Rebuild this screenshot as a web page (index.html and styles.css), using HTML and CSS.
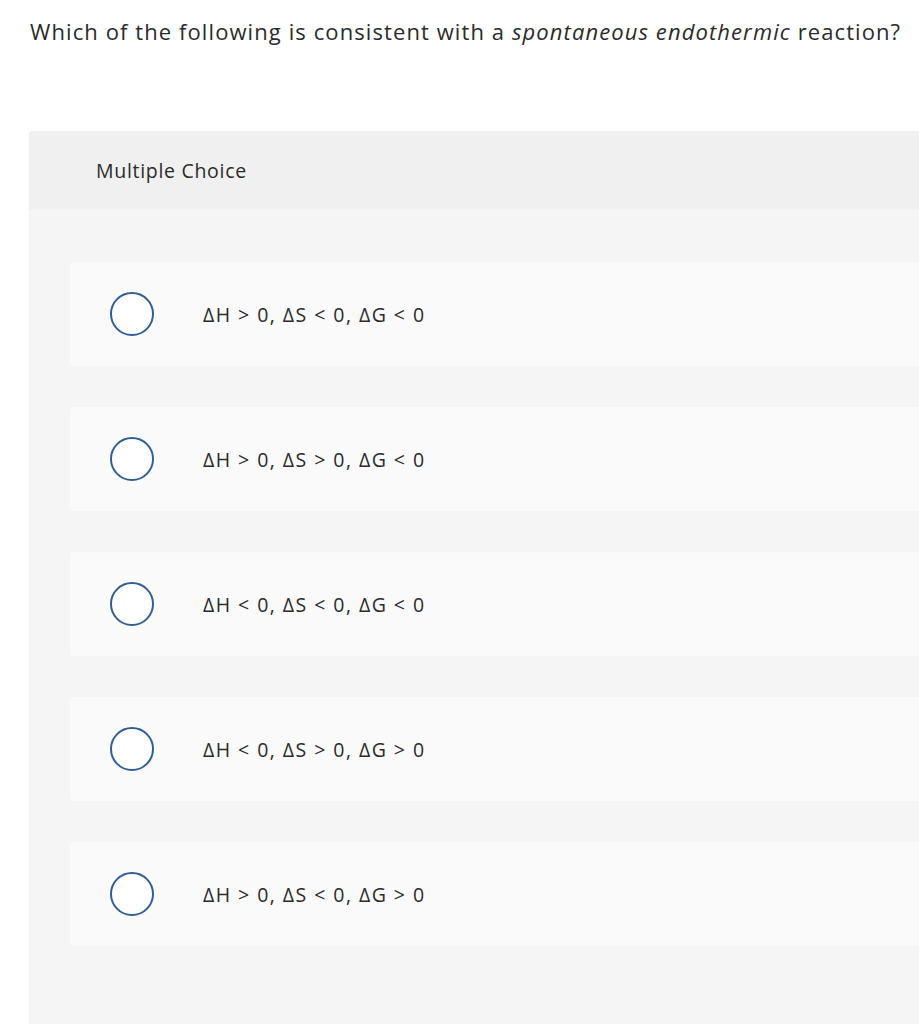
FILE: index.html
```html
<!DOCTYPE html>
<html>
<head>
<meta charset="utf-8">
<link rel="stylesheet" href="styles.css">
</head>
<body>
<p class="question">Which of the following is consistent with a <em>spontaneous endothermic</em> reaction?</p>
<div class="panel">
  <div class="panel-head">Multiple Choice</div>
  <div class="options">
    <div class="option"><span class="radio"></span><span class="label">ΔH &gt; 0, ΔS &lt; 0, ΔG &lt; 0</span></div>
    <div class="option"><span class="radio"></span><span class="label">ΔH &gt; 0, ΔS &gt; 0, ΔG &lt; 0</span></div>
    <div class="option"><span class="radio"></span><span class="label">ΔH &lt; 0, ΔS &lt; 0, ΔG &lt; 0</span></div>
    <div class="option"><span class="radio"></span><span class="label">ΔH &lt; 0, ΔS &gt; 0, ΔG &gt; 0</span></div>
    <div class="option"><span class="radio"></span><span class="label">ΔH &gt; 0, ΔS &lt; 0, ΔG &gt; 0</span></div>
  </div>
</div>
</body>
</html>
```
FILE: styles.css
```css
html, body {
  margin: 0;
  padding: 0;
  background: #ffffff;
  overflow: hidden;
}
body {
  font-family: "Open Sans", "Noto Sans", sans-serif;
  color: #2b2b2b;
}
.question {
  margin: 0;
  padding: 16px 0 0 30px;
  font-size: 22px;
  line-height: 30px;
  letter-spacing: 1.09px;
  height: 131px;
  box-sizing: border-box;
  white-space: nowrap;
}
.question em {
  font-style: italic;
}
.panel {
  margin-left: 29px;
  background: #f5f5f5;
  border-radius: 4px 0 0 0;
  height: 900px;
}
.panel-head {
  height: 79px;
  background: #f0f0f0;
  border-radius: 4px 0 0 0;
  display: flex;
  align-items: center;
  padding-left: 67px;
  font-size: 19.5px;
  letter-spacing: 0.7px;
}
.options {
  padding: 52px 0 0 41px;
  display: flex;
  flex-direction: column;
  gap: 41px;
}
.option {
  height: 104px;
  background: #fafafa;
  border-radius: 4px 0 0 4px;
  display: flex;
  align-items: center;
  padding-left: 40px;
}
.radio {
  width: 44px;
  height: 44px;
  box-sizing: border-box;
  border: 2px solid #2f5e96;
  border-radius: 50%;
  background: #ffffff;
  flex: none;
}
.label {
  margin-left: 49px;
  font-size: 19.5px;
  letter-spacing: 1.45px;
}
```
